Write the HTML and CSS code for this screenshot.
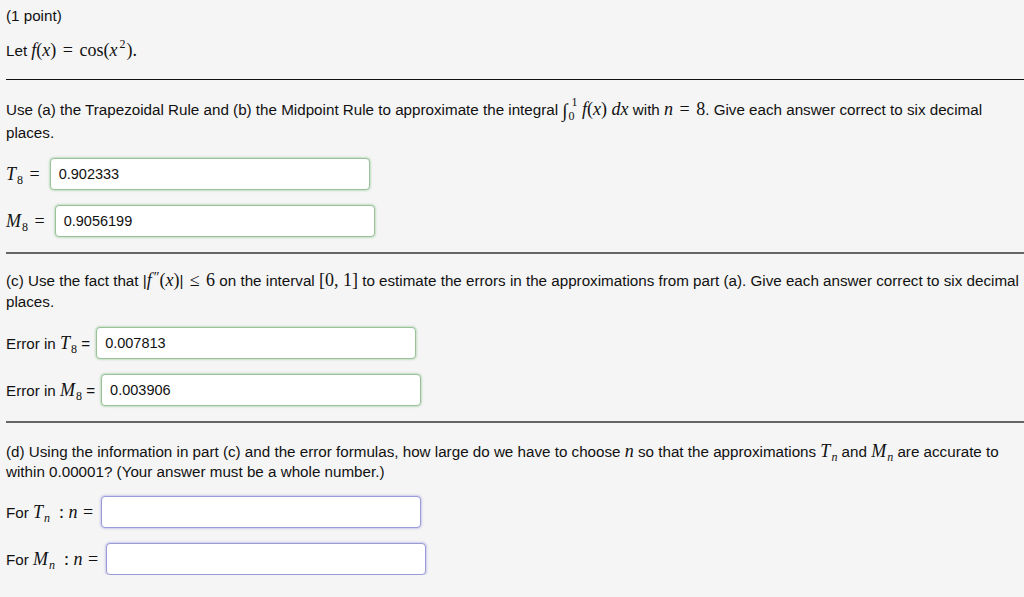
FILE: index.html
```html
<!DOCTYPE html>
<html>
<head>
<meta charset="utf-8">
<link rel="stylesheet" href="styles.css">
</head>
<body>
<div class="page">
  <div class="points">(1 point)</div>
  <div class="let">Let <span class="m"><i>f</i>(<i>x</i>) <span class="op">=</span> cos(<i>x</i><sup class="sq">2</sup>).</span></div>
  <hr class="rule rule-black">

  <p class="para para-a">Use (a) the Trapezoidal Rule and (b) the Midpoint Rule to approximate the integral <span class="m"><span class="int">∫</span><span class="lo">0</span><span class="up">1</span> <i>f</i>(<i>x</i>) <i>dx</i></span> with <span class="m"><i>n</i> <span class="op">=</span> 8</span>. Give each answer correct to six decimal places.</p>

  <div class="row">
    <span class="label"><span class="m"><i>T</i><sub>8</sub> <span class="op">=</span></span></span>
    <div class="box box-green">0.902333</div>
  </div>
  <div class="row">
    <span class="label"><span class="m"><i>M</i><sub>8</sub> <span class="op">=</span></span></span>
    <div class="box box-green">0.9056199</div>
  </div>

  <hr class="rule rule-gray">

  <p class="para para-c">(c) Use the fact that |<span class="m"><i>f</i><span class="pp">″</span>(<i>x</i>)</span>| <span class="m"><span class="op">≤</span> 6</span> on the interval <span class="m">[0, 1]</span> to estimate the errors in the approximations from part (a). Give each answer correct to six decimal places.</p>

  <div class="row row-tight">
    <span class="label">Error in <span class="m"><i>T</i><sub>8</sub></span> =</span>
    <div class="box box-green">0.007813</div>
  </div>
  <div class="row row-tight">
    <span class="label">Error in <span class="m"><i>M</i><sub>8</sub></span> =</span>
    <div class="box box-green">0.003906</div>
  </div>

  <hr class="rule rule-gray">

  <p class="para para-d">(d) Using the information in part (c) and the error formulas, how large do we have to choose <span class="m"><i>n</i></span> so that the approximations <span class="m"><i>T</i><sub><i>n</i></sub></span> and <span class="m"><i>M</i><sub><i>n</i></sub></span> are accurate to within 0.00001? (Your answer must be a whole number.)</p>

  <div class="row row-for">
    <span class="label">For <span class="m"><i>T</i><sub><i>n</i></sub> &nbsp;: <i>n</i> <span class="op">=</span></span></span>
    <div class="box box-purple"></div>
  </div>
  <div class="row row-for">
    <span class="label">For <span class="m"><i>M</i><sub><i>n</i></sub> &nbsp;: <i>n</i> <span class="op">=</span></span></span>
    <div class="box box-purple"></div>
  </div>
</div>
</body>
</html>
```

FILE: styles.css
```css
html, body {
  margin: 0;
  padding: 0;
  background: #f5f5f5;
}

body {
  font-family: "Liberation Sans", Arial, sans-serif;
  font-size: 15.2px;
  color: #111;
}

.page {
  padding: 6px 0 0 6px;
}

.points {
  line-height: 20px;
}

.let {
  margin-top: 12px;
  line-height: 24px;
}

.m {
  font-family: "Liberation Serif", "Times New Roman", serif;
  font-size: 18px;
  white-space: nowrap;
}

.m i {
  font-style: italic;
}

.m sup,
.m sub {
  font-size: 12px;
  line-height: 0;
}

.m sub {
  vertical-align: -4px;
  margin-left: 1px;
}

.m sup {
  vertical-align: 8px;
}

.sq {
  margin-left: 2px;
  margin-right: 1px;
}

.pp {
  font-size: 14px;
  vertical-align: 4px;
  margin-left: 2px;
}

.op {
  padding: 0 2px;
}

.rule {
  margin: 0;
  border: 0;
}

.rule-black {
  margin-top: 16px;
  height: 1px;
  background: #111;
}

.rule-gray {
  margin-top: 15px;
  height: 2px;
  background: #666;
}

.para {
  margin: 0;
}

.para-a {
  margin-top: 18px;
  line-height: 23px;
}

.para-c {
  margin-top: 13px;
  line-height: 21px;
}

.para-d {
  margin-top: 18px;
  line-height: 20px;
}

.int {
  font-size: 19px;
  font-style: italic;
  display: inline-block;
  vertical-align: -2px;
  line-height: 0;
}

.lo,
.up {
  font-size: 12px;
  line-height: 0;
  display: inline-block;
}

.lo {
  vertical-align: -5px;
  margin-left: 1px;
}

.up {
  vertical-align: 9px;
  margin-left: -3px;
}

.row {
  display: flex;
  align-items: center;
  gap: 8px;
  margin-top: 15px;
  height: 32px;
}

.para + .row {
  margin-top: 15px;
}

.para-a + .row,
.para-d + .row {
  margin-top: 14px;
}

.row-tight {
  gap: 6px;
}

.row-for {
  gap: 7px;
}

.row-for .op {
  padding: 0 1px;
}

.label {
  white-space: nowrap;
}

.box {
  width: 302px;
  height: 30px;
  background: #fff;
  border-radius: 4px;
  padding: 0 8px;
  display: flex;
  align-items: center;
  font-size: 14.5px;
  color: #111;
}

.box-green {
  border: 1px solid #99c299;
  box-shadow: 0 0 2px 1px rgba(140, 190, 140, 0.45);
}

.box-purple {
  border: 1px solid #9a9ad8;
  box-shadow: 0 0 2px 1px rgba(150, 150, 220, 0.45);
}
```
